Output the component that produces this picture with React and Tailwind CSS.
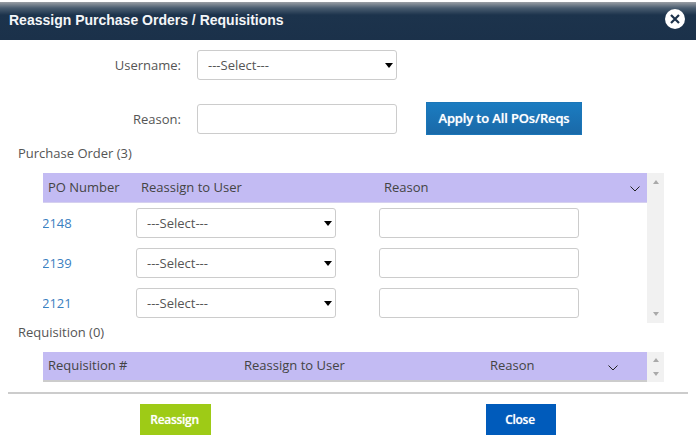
import React from 'react'

function Caret() {
  return <span className="absolute right-[4px] top-[13px] w-0 h-0 border-x-[4.5px] border-x-transparent border-t-[5px] border-t-black" />
}

function SelectBox({ className = '' }) {
  return (
    <div className={`relative w-[200px] h-[30px] ${className}`}>
      <select className="w-full h-full appearance-none bg-white border border-[#ccc] rounded-[3px] pl-[10px] pt-[2px] text-[13px] text-[#555] outline-none">
        <option>---Select---</option>
      </select>
      <Caret />
    </div>
  )
}

function TextBox() {
  return <input type="text" className="block w-[200px] h-[30px] bg-white border border-[#ccc] rounded-[3px] outline-none" />
}

function Chevron({ className = '' }) {
  return (
    <svg width="10" height="6" viewBox="0 0 10 6" className={className} fill="none" stroke="#222" strokeWidth="1">
      <path d="M0.5 0.5l4.5 4.5 4.5-4.5" />
    </svg>
  )
}

function Scrollbar({ className = '' }) {
  return (
    <div className={`w-[17px] bg-[#f1f1f1] flex flex-col justify-between items-center ${className}`}>
      <span className="w-0 h-0 border-x-[3.5px] border-x-transparent border-b-[4px] border-b-[#a9a9a9]" />
      <span className="w-0 h-0 border-x-[3.5px] border-x-transparent border-t-[4px] border-t-[#a9a9a9]" />
    </div>
  )
}

function PoRow({ number }) {
  return (
    <div className="flex items-center h-[30px] mb-[10px]">
      <a href="#" className="w-[93px] -ml-[1px] mr-[1px] mt-[1px] text-[13px] text-[#3a80bf]">{number}</a>
      <SelectBox />
      <div className="ml-[43px]"><TextBox /></div>
    </div>
  )
}

export default function App() {
  return (
    <div className="w-[696px] h-[443px] overflow-hidden bg-white pt-[2px] text-[#555] font-['Open_Sans',sans-serif] text-[13px]">
      {/* Title bar */}
      <div className="h-[38px] flex items-center justify-between pl-[9px] pr-[11px] bg-[linear-gradient(to_bottom,#9a9fa5_0px,#4a5d70_6px,#1c334c_13px,#1b314a_100%)]">
        <h1 className="font-['Liberation_Sans',sans-serif] font-bold text-[14px] text-[#f4f6f8] -mt-[1px]">Reassign Purchase Orders / Requisitions</h1>
        <button className="w-5 h-5 rounded-full bg-white flex items-center justify-center -mt-[4px]">
          <svg width="10" height="10" viewBox="0 0 10 10" fill="none" stroke="#1b314a" strokeWidth="2.2">
            <path d="M1 1l8 8M9 1l-8 8" />
          </svg>
        </button>
      </div>

      {/* Top form */}
      <div className="flex items-center h-[30px] mt-[10px]">
        <label className="w-[181px] text-right mt-[1px]">Username:</label>
        <SelectBox className="ml-[16px]" />
      </div>
      <div className="flex items-center h-[30px] mt-[24px]">
        <label className="w-[181px] text-right mt-[1px]">Reason:</label>
        <div className="ml-[16px]"><TextBox /></div>
        <button className="ml-[29px] w-[156px] h-[33px] -mt-[1px] bg-[linear-gradient(to_bottom,#1b7cc1,#1a69a8)] border border-[#1b76b8] text-white font-semibold text-[13px] tracking-[-0.15px] [text-shadow:0_0_1px_rgba(255,255,255,0.6)]">Apply to All POs/Reqs</button>
      </div>

      {/* Purchase orders */}
      <div className="pl-[18px] mt-[10px] h-[18px] leading-[18px]">Purchase Order (3)</div>
      <div className="flex ml-[43px] mt-[11px]">
        <div className="w-[604px]">
          <div className="flex items-center h-[30px] bg-[#c3bbf3] border-b border-[#d5d0ef] pl-[5px] pr-[7px] text-[#444]">
            <span className="w-[93px]">PO Number</span>
            <span className="w-[243px]">Reassign to User</span>
            <span className="flex-1">Reason</span>
            <Chevron className="mt-[3px]" />
          </div>
          <div className="pt-[5px] h-[120px] overflow-hidden">
            <PoRow number="2148" />
            <PoRow number="2139" />
            <PoRow number="2121" />
          </div>
        </div>
        <Scrollbar className="h-[150px] py-[7px]" />
      </div>

      {/* Requisitions */}
      <div className="pl-[18px] h-[18px] leading-[18px]">Requisition (0)</div>
      <div className="flex ml-[43px] mt-[11px]">
        <div className="w-[604px] flex items-center h-[30px] bg-[#c3bbf3] border-b-2 border-[#ccc] pl-[5px] pr-[29px] text-[#444]">
          <span className="w-[196px]">Requisition #</span>
          <span className="w-[246px]">Reassign to User</span>
          <span className="flex-1">Reason</span>
          <Chevron className="mt-[3px]" />
        </div>
        <Scrollbar className="h-[30px] py-[6px]" />
      </div>

      {/* Footer */}
      <div className="mx-[8px] mt-[10px] border-t-2 border-[#ccc]">
        <div className="flex mt-[10px] pl-[132px]">
          <button className="w-[71px] h-[31px] pr-[2px] bg-[#9ecb16] text-white font-semibold text-[12px] tracking-[-0.3px] [text-shadow:0_0_1px_rgba(255,255,255,0.6)]">Reassign</button>
          <button className="ml-[275px] w-[70px] h-[31px] pr-[2px] bg-[#005bbb] text-white font-semibold text-[12px] tracking-[-0.3px] [text-shadow:0_0_1px_rgba(255,255,255,0.6)]">Close</button>
        </div>
      </div>
    </div>
  )
}
